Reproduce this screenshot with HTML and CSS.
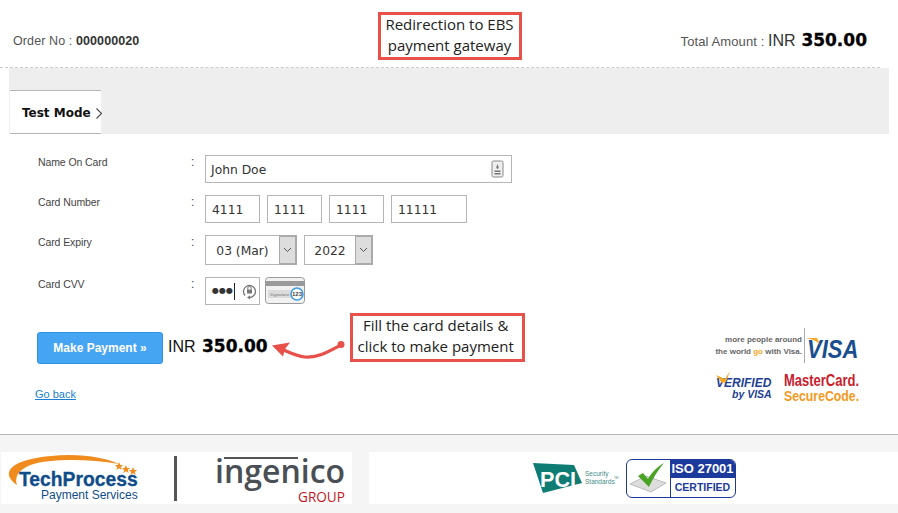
FILE: index.html
```html
<!DOCTYPE html>
<html lang="en">
<head>
    <meta charset="UTF-8">
    <meta name="viewport" content="width=device-width, initial-scale=1.0">
    <title>Payment Gateway</title>
    <link rel="stylesheet" href="styles.css">
</head>
<body>
    <!-- Order header -->
    <div class="header">
        <div class="order">Order No : <b>000000020</b></div>
        <div class="note note-top"><div class="note-text">Redirection to EBS<br>payment gateway</div></div>
        <div class="total">Total Amount : <span class="inr">INR</span> <b class="money">350.00</b></div>
    </div>

    <div class="band">
        <div class="tab">Test Mode
            <svg class="chevron" width="6" height="11" viewBox="0 0 6 11"><path d="M.5 .5l5 5-5 5" fill="none" stroke="#444" stroke-width="1.1"/></svg>
        </div>
    </div>

    <div class="main">
        <div class="left">
            <div class="field">
                <label>Name On Card</label><span class="colon">:</span>
                <div class="box name-box">John Doe
                    <svg class="contact-icon" width="13" height="18" viewBox="0 0 13 18"><rect x="1" y="1" width="11" height="16" rx="1.5" fill="#eee" stroke="#888"/><path d="M6.500 4l1.300 3.500-1 1.500h-.6l-1-1.500zM3.500 10.500h6v1.500h-6zM3.500 13h6v1.500h-6z" fill="#777"/></svg>
                </div>
            </div>
            <div class="field">
                <label>Card Number</label><span class="colon">:</span>
                <div class="box num">4111</div>
                <div class="box num">1111</div>
                <div class="box num">1111</div>
                <div class="box num-long">11111</div>
            </div>
            <div class="field field-expiry">
                <label>Card Expiry</label><span class="colon">:</span>
                <div class="select month"><span class="select-val">03 (Mar)</span><span class="select-btn"><svg width="9" height="6" viewBox="0 0 9 6"><path d="M1 1l3.500 3.500L8 1" fill="none" stroke="#555"/></svg></span></div>
                <div class="select year"><span class="select-val">2022</span><span class="select-btn"><svg width="9" height="6" viewBox="0 0 9 6"><path d="M1 1l3.500 3.500L8 1" fill="none" stroke="#555"/></svg></span></div>
            </div>
            <div class="field field-cvv">
                <label>Card CVV</label><span class="colon">:</span>
                <div class="box cvv"><span class="dots">&#9679;&#9679;&#9679;</span><span class="caret"></span>
                    <svg class="lock-icon" width="15" height="17" viewBox="0 0 15 17"><path d="M3 12.500A6 6 0 1 1 7.500 14.500" fill="none" stroke="#777" stroke-width="1.300"/><path d="M8 12.500v4l-3-2z" fill="#777"/><rect x="5" y="6.500" width="5" height="4" fill="#777"/><path d="M5.800 6.500V5a1.700 1.700 0 0 1 3.400 0v1.500" fill="none" stroke="#777"/></svg>
                </div>
                <svg class="cvv-card" width="40" height="27" viewBox="0 0 40 27">
                    <rect x=".5" y=".5" width="39" height="26" rx="3" fill="#f1f1f1" stroke="#999"/>
                    <rect x="1" y="4" width="38" height="5" fill="#9a9a9a"/>
                    <rect x="3" y="13" width="24" height="8" fill="#dcdcdc"/>
                    <text class="cvv-sign" x="5" y="19">Signature</text>
                    <circle cx="32" cy="17" r="6" fill="#fff" stroke="#3a9be0" stroke-width="1.500"/>
                    <text class="cvv-num" x="32" y="19">123</text>
                </svg>
            </div>

            <div class="pay-row">
                <button class="pay-btn">Make Payment &raquo;</button>
                <div class="pay-amount"><span class="inr">INR</span> <b class="money">350.00</b></div>
                <svg class="arrow" width="74" height="26" viewBox="0 0 74 26">
                    <path d="M70 7C55 15 46 20 34 19C24 18 16 13 8 10" fill="none" stroke="#e8504a" stroke-width="3.200"/>
                    <path d="M1 7.500L19 4.500L14 11L12 18.500z" fill="#e8504a"/>
                    <circle cx="70" cy="6.500" r="3.500" fill="#e8504a"/>
                </svg>
                <div class="note note-pay"><div class="note-text">Fill the card details &amp;<br>click to make payment</div></div>
            </div>
            <a class="back" href="#">Go back</a>
        </div>

        <div class="brands">
            <svg class="brand-logos" width="146" height="80" viewBox="0 0 146 80">
                <text class="visa-line" x="87" y="20" text-anchor="end">more people around</text>
                <text class="visa-line" x="87" y="32" text-anchor="end">the world <tspan class="visa-go">go</tspan> with Visa.</text>
                <rect x="89" y="6" width="1" height="35" fill="#aaa"/>
                <text class="visa-big" transform="translate(92 36) scale(1 1.150)">VISA</text>
                <path d="M91 16h11l3 7c-3-4-8-6-14-7z" fill="#f5a623"/>
                <text class="verified" x="1" y="65">VERIFIED</text>
                <text class="verified-by" x="17" y="76">by VISA</text>
                <path d="M1 53l9 4 5-8-4 11-4 1z" fill="#f5a623"/>
                <text class="mc" transform="translate(69 64) scale(1 1.250)">MasterCard.</text>
                <text class="sc" transform="translate(69 79) scale(1 1.250)">SecureCode.</text>
            </svg>
        </div>
    </div>

    <!-- Footer logos -->
    <div class="footer">
        <div class="logo-box logo-left">
            <svg width="351" height="52" viewBox="0 0 351 52">
                <path d="M16 33C0 22 6 8 50 4C80 1 105 6 118 12C95 8 70 7 50 9C25 11 12 20 16 33z" fill="#f08c1e"/>
                <path d="M118 10l1.200 3h3l-2.400 2 .8 3-2.600-1.800-2.600 1.800.8-3-2.400-2h3zM125 13l1.200 3h3l-2.400 2 .8 3-2.600-1.800-2.600 1.800.8-3-2.400-2h3zM132 15l1.200 3h3l-2.400 2 .8 3-2.600-1.800-2.600 1.800.8-3-2.400-2h3z" fill="#f08c1e"/>
                <text class="tp-name" x="18" y="34">TechProcess</text>
                <text class="tp-sub" x="40" y="47">Payment Services</text>
                <rect x="173" y="4" width="3" height="45" fill="#555"/>
                <rect x="223" y="5" width="74" height="2" fill="#555"/>
                <text class="ing-name" x="214" y="31">ingenico</text>
                <text class="ing-group" x="297" y="50">GROUP</text>
            </svg>
        </div>
        <div class="logo-box logo-right">
            <svg class="pci" width="90" height="34" viewBox="0 0 90 34">
                <path d="M1 1l41 2 8 18-39 10z" fill="#0f7c74"/>
                <text class="pci-name" x="8" y="25">PCI</text>
                <text class="pci-sub" x="53" y="14">Security</text>
                <text class="pci-sub" x="53" y="22">Standards</text>
                <text class="pci-tm" x="82" y="17">TM</text>
            </svg>
            <div class="iso">
                <div class="iso-mark">
                    <svg width="40" height="34" viewBox="0 0 40 34"><path d="M2 23l16-8 20 7-15 9z" fill="#ddd" stroke="#999" stroke-width=".6"/><path d="M10 15l5-3 5 6C24 11 29 6 36 2C30 9 25 17 21 26z" fill="#4aa325"/></svg>
                </div>
                <div class="iso-text">
                    <div class="iso-top">ISO 27001</div>
                    <div class="iso-bottom">CERTIFIED</div>
                </div>
            </div>
        </div>
    </div>
</body>
</html>
```

FILE: styles.css
```css
html, body { margin: 0; padding: 0; background: #fff; }
body { width: 898px; height: 513px; overflow: hidden; font-family: "Liberation Sans", Arial, sans-serif; }
b { font-weight: bold; }

.header { display: flex; align-items: flex-start; justify-content: space-between; height: 67px; margin-right: 18px; border-bottom: 1px dashed #ccc; }
.order { margin: 34px 0 0 13px; font-size: 12.500px; color: #555; letter-spacing: .1px; }
.order b { color: #333; }
.note { border: 3px solid #e8504a; font-family: "Open Sans", sans-serif; font-size: 15px; line-height: 21px; color: #222; text-align: center; box-sizing: border-box; white-space: nowrap; }
.note-text { margin-top: -1px; }
.note-top { width: 144px; height: 48px; margin-top: 12px; margin-left: 79px; }
.total { margin: 30px 13px 0 0; font-size: 13px; color: #555; white-space: nowrap; letter-spacing: .1px; }
.inr { font-size: 16px; color: #333; letter-spacing: 0; }
.money { font-family: "DejaVu Sans", sans-serif; font-size: 17px; color: #000; margin-left: 2px; letter-spacing: 0; -webkit-text-stroke: .3px #000; }

.band { margin: 0 9px; height: 66px; background: #eee; display: flex; align-items: flex-end; }
.tab { position: relative; width: 79px; height: 42px; margin-left: 1px; padding-left: 12px; background: #fff; border-top: 1px solid #b5b5b5; border-bottom: 1px solid #b5b5b5; font-family: "DejaVu Sans", sans-serif; font-weight: bold; font-size: 12px; line-height: 44px; color: #111; }
.chevron { position: absolute; left: 86px; top: 17px; }

.main { display: flex; justify-content: space-between; height: 300px; }
.left { padding: 21px 0 0 38px; width: 540px; box-sizing: border-box; }
.field { display: flex; align-items: flex-start; height: 28px; margin-bottom: 12px; }
.field-expiry { height: 30px; }
.field label { width: 153px; font-size: 10.500px; color: #444; letter-spacing: -.1px; line-height: 14px; flex: none; }
.colon { width: 14px; font-size: 12px; color: #444; flex: none; line-height: 14px; }

.box { height: 28px; box-sizing: border-box; border: 1px solid #b5b5b5; background: #fff; font-family: "DejaVu Sans", sans-serif; font-size: 12.300px; line-height: 28px; color: #333; margin-right: 7px; padding-left: 5px; position: relative; }
.name-box { width: 307px; display: flex; justify-content: space-between; align-items: center; padding-right: 7px; padding-top: 1px; }
.contact-icon { margin-top: -2px; }
.num { width: 55px; padding-left: 6px; }
.num-long { width: 76px; padding-left: 6px; }
.select { display: flex; height: 30px; box-sizing: border-box; border: 1px solid #b5b5b5; background: #fff; font-family: "DejaVu Sans", sans-serif; font-size: 12.300px; line-height: 30px; color: #333; margin-right: 7px; }
.month { width: 92px; }
.year { width: 69px; }
.select-val { flex: 1; text-align: center; }
.select-btn { width: 18px; margin: -1px -1px -1px 0; background: #ddd; border: 2px solid #aaa; border-left-width: 1px; box-sizing: border-box; display: flex; align-items: center; justify-content: center; }

.field-cvv { margin-bottom: 0; }
.cvv { width: 55px; margin-right: 5px; padding-left: 6px; display: flex; align-items: center; }
.dots { font-size: 8px; color: #333; }
.caret { width: 1px; height: 17px; background: #222; margin-left: 1px; }
.lock-icon { position: absolute; right: 2px; top: 5px; }
.cvv-sign { font-family: "Liberation Serif", serif; font-style: italic; font-size: 5px; fill: #777; }
.cvv-num { font-family: "Liberation Sans", sans-serif; font-size: 6px; font-weight: bold; fill: #444; text-anchor: middle; }

.pay-row { display: flex; align-items: flex-start; height: 49px; margin-top: 8px; margin-left: -1px; }
.pay-btn { width: 126px; height: 32px; margin-top: 19px; padding: 0; background: #46a5f3; border: 1px solid #2f93e8; border-radius: 3px; color: #fff; font-family: "Liberation Sans", sans-serif; font-weight: bold; font-size: 12px; flex: none; }
.pay-amount { margin-left: 5px; margin-top: 23px; white-space: nowrap; font-size: 16px; flex: none; }
.pay-amount .inr { color: #111; }
.arrow { margin-left: 3px; margin-top: 25px; flex: none; }
.note-pay { width: 175px; height: 49px; margin-left: 5px; padding-right: 3px; flex: none; }
.back { display: block; margin: 26px 0 0 -3px; font-size: 11px; color: #1a7fd0; }

.brands { align-self: flex-end; padding: 0 37px 32px 0; }
.brand-logos { display: block; }
.visa-line { font-family: "Liberation Sans", sans-serif; font-size: 8px; font-weight: bold; fill: #666; }
.visa-go { fill: #f5a623; }
.visa-big { font-family: "Liberation Sans", sans-serif; font-size: 22px; font-weight: bold; font-style: italic; fill: #1a4f8f; }
.verified { font-family: "Liberation Sans", sans-serif; font-size: 12px; font-weight: bold; font-style: italic; fill: #1d3f94; }
.verified-by { font-family: "Liberation Sans", sans-serif; font-size: 10.500px; font-weight: bold; font-style: italic; fill: #1d3f94; }
.mc { font-family: "Liberation Sans", sans-serif; font-size: 13px; font-weight: bold; fill: #c8202c; }
.sc { font-family: "Liberation Sans", sans-serif; font-size: 12.300px; font-weight: bold; fill: #f39a1e; }

.footer { display: flex; justify-content: space-between; height: 79px; padding: 17px 0 9px 1px; box-sizing: border-box; background: #f5f5f5; border-top: 1px solid #b5b5b5; }
.logo-box { height: 52px; background: #fff; }
.logo-left { width: 351px; }
.logo-right { width: 529px; display: flex; align-items: center; justify-content: center; }
.tp-name { font-family: "Liberation Sans", sans-serif; font-size: 19.300px; font-weight: bold; fill: #0f4c8a; stroke: #0f4c8a; stroke-width: .3px; }
.tp-sub { font-family: "Liberation Sans", sans-serif; font-size: 12px; fill: #0f4c8a; }
.ing-name { font-family: "Open Sans", sans-serif; font-size: 32px; font-weight: 600; fill: #4a4f55; }
.ing-group { font-family: "Open Sans", sans-serif; font-size: 13.600px; fill: #c4161c; }
.pci { margin-top: 2px; margin-right: 3px; }
.pci-name { font-family: "Liberation Sans", sans-serif; font-size: 21.600px; font-weight: bold; fill: #fff; }
.pci-sub { font-family: "Liberation Sans", sans-serif; font-size: 6.500px; fill: #3f8c85; }
.pci-tm { font-family: "Liberation Sans", sans-serif; font-size: 3px; fill: #3f8c85; }
.iso { display: flex; width: 110px; height: 39px; margin-left: 1px; box-sizing: border-box; border: 1px solid #1c3a9c; border-radius: 6px; overflow: hidden; background: #fff; }
.iso-mark { width: 43px; display: flex; align-items: center; justify-content: center; }
.iso-text { flex: 1; border-left: 1px solid #1c3a9c; font-family: "Liberation Sans", sans-serif; font-weight: bold; text-align: center; }
.iso-top { height: 18px; background: #1c3a9c; color: #fff; font-size: 13px; line-height: 18px; white-space: nowrap; }
.iso-bottom { color: #1c3a9c; font-size: 10.500px; line-height: 19px; }
```
